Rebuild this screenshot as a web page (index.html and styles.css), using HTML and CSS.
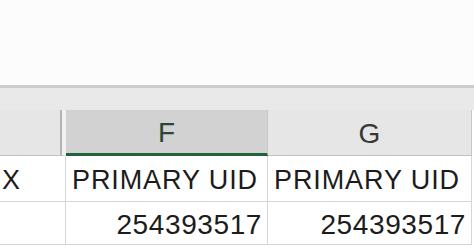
FILE: index.html
```html
<!DOCTYPE html>
<html lang="en">
<head>
    <meta charset="UTF-8">
    <title>Sheet</title>
    <link rel="stylesheet" href="styles.css">
</head>
<body>
    <div class="ribbon"></div>
    <div class="band"></div>

    <div class="sheet">
        <div class="col-head col-head-prev"></div>
        <div class="col-head col-head-active">F</div>
        <div class="col-head">G</div>

        <div class="cell cell-prev">X</div>
        <div class="cell">PRIMARY UID</div>
        <div class="cell">PRIMARY UID</div>

        <div class="cell cell-prev"></div>
        <div class="cell num">254393517</div>
        <div class="cell num">254393517</div>
    </div>
</body>
</html>
```

FILE: styles.css
```css
:root {
    --grid-line: #d6d6d6;
    --head-bg: #e6e6e6;
    --head-active: #d2d2d2;
    --excel-green: #23623f;
    --text-color: #1c1c1c;
}

* {
    margin: 0;
    padding: 0;
    box-sizing: border-box;
}

body {
    width: 474px;
    height: 248px;
    overflow: hidden;
    background-color: #ffffff;
    font-family: 'Liberation Sans', Arial, sans-serif;
    color: var(--text-color);
}

.ribbon {
    height: 88px;
    background-color: #fcfcfc;
    border-bottom: 3px solid #cbcbcb;
}

.band {
    height: 22px;
    background-color: #e9e9e9;
}

.sheet {
    display: grid;
    grid-template-columns: 66px 202px 204px;
    grid-template-rows: 46px 46px 43px;
}

.col-head {
    display: flex;
    align-items: center;
    justify-content: center;
    padding-top: 3px;
    background-color: var(--head-bg);
    border-right: 1px solid #c6c6c6;
    border-bottom: 1px solid #c2c2c2;
    font-size: 28px;
    color: #383838;
}

.col-head-prev {
    border-right: 4px solid #f1f1f1;
    box-shadow: inset -2px 0 0 #b4b4b4;
}

.col-head-active {
    background-color: var(--head-active);
    border-bottom: 3px solid var(--excel-green);
    color: #2a4636;
}

.cell {
    display: flex;
    align-items: center;
    padding: 3px 6px 0;
    border-right: 1px solid var(--grid-line);
    border-bottom: 1px solid var(--grid-line);
    font-size: 27px;
    letter-spacing: 0.9px;
    white-space: nowrap;
    overflow: hidden;
}

.cell-prev {
    padding-left: 2px;
}

.num {
    justify-content: flex-end;
    font-size: 28px;
    letter-spacing: 0.6px;
    padding-right: 5px;
}
```
